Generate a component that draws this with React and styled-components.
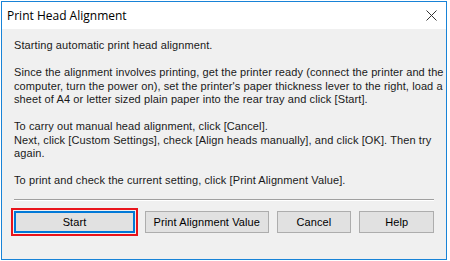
import React from "react";
import styled, { createGlobalStyle } from "styled-components";

const GlobalStyle = createGlobalStyle`
  html, body {
    margin: 0;
    padding: 0;
    background: #ffffff;
  }
`;

const Window = styled.div`
  box-sizing: border-box;
  margin: 1px 0 0 1px;
  width: 446px;
  height: 259px;
  border: 1px solid #1883d7;
  background: #f0f0f0;
  display: flex;
  flex-direction: column;
`;

const TitleBar = styled.div`
  height: 27px;
  background: #ffffff;
  display: flex;
  align-items: center;
  justify-content: space-between;
  padding: 0 0 0 5px;
  font-family: "Open Sans", "Noto Sans", sans-serif;
  font-size: 12px;
  color: #000;
`;

const CloseButton = styled.div`
  width: 30px;
  height: 27px;
  display: flex;
  align-items: center;
  justify-content: center;
`;

const Body = styled.div`
  flex: 1;
  padding: 10px 12px 0 12px;
  display: flex;
  flex-direction: column;
  font-family: "Liberation Sans", Arial, sans-serif;
  font-size: 11px;
  letter-spacing: 0.1px;
  color: #1a1a1a;
`;

const Para = styled.p`
  margin: 0 0 13.5px 0;
  line-height: 13.5px;
  white-space: nowrap;
`;

const Separator = styled.div`
  margin-top: 11px;
  height: 1px;
  background: #a0a0a0;
  border-bottom: 1px solid #ffffff;
`;

const ButtonRow = styled.div`
  display: flex;
  align-items: center;
  gap: 8px;
  margin-top: 10px;
`;

const Highlight = styled.div`
  border: 2px solid #e8141b;
  padding: 1px;
  margin: -3px -1px -3px -3px;
  display: flex;
`;

const Button = styled.div`
  box-sizing: border-box;
  width: ${(p) => p.$w}px;
  height: 22px;
  background: #e1e1e1;
  border: ${(p) => (p.$focused ? "2px solid #0078d7" : "1px solid #adadad")};
  display: flex;
  align-items: center;
  justify-content: center;
  font-family: "Liberation Sans", Arial, sans-serif;
  font-size: 11px;
  color: #000;
`;

export default function App() {
  return (
    <>
      <GlobalStyle />
      <Window>
        <TitleBar>
          <span>Print Head Alignment</span>
          <CloseButton>
            <svg width="11" height="11" viewBox="0 0 11 11">
              <path d="M0.5 0.5 L10.5 10.5 M10.5 0.5 L0.5 10.5" stroke="#333" strokeWidth="1" />
            </svg>
          </CloseButton>
        </TitleBar>
        <Body>
          <Para>Starting automatic print head alignment.</Para>
          <Para>
            Since the alignment involves printing, get the printer ready (connect the printer and the
            <br />
            computer, turn the power on), set the printer's paper thickness lever to the right, load a
            <br />
            sheet of A4 or letter sized plain paper into the rear tray and click [Start].
          </Para>
          <Para>
            To carry out manual head alignment, click [Cancel].
            <br />
            Next, click [Custom Settings], check [Align heads manually], and click [OK]. Then try
            <br />
            again.
          </Para>
          <Para style={{ marginBottom: 0 }}>
            To print and check the current setting, click [Print Alignment Value].
          </Para>
          <Separator />
          <ButtonRow>
            <Highlight>
              <Button $w={121} $focused>Start</Button>
            </Highlight>
            <Button $w={124}>Print Alignment Value</Button>
            <Button $w={75}>Cancel</Button>
            <Button $w={75}>Help</Button>
          </ButtonRow>
        </Body>
      </Window>
    </>
  );
}
